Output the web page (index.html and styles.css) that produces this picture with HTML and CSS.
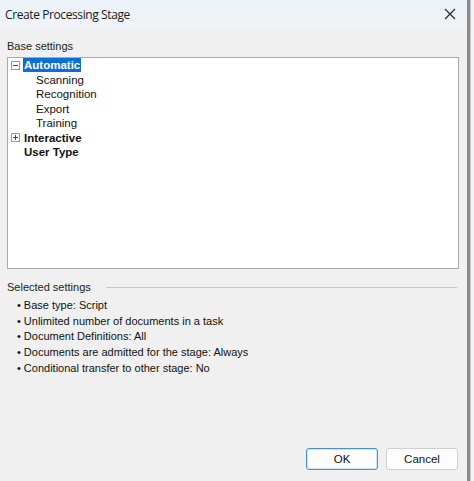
FILE: index.html
```html
<!DOCTYPE html>
<html>
<head>
<meta charset="utf-8">
<link rel="stylesheet" href="styles.css">
</head>
<body>
<div class="screen">
  <div class="dialog">
    <div class="titlebar">
      <span class="title">Create Processing Stage</span>
      <svg class="close" width="12" height="12" viewBox="0 0 12 12"><path d="M1 1L11 11M11 1L1 11" stroke="#222" stroke-width="1.1" fill="none"/></svg>
    </div>
    <div class="content">
      <div class="label">Base settings</div>
      <div class="tree">
        <div class="node top">
          <span class="toggle"><svg width="9" height="9" viewBox="0 0 9 9"><rect x="0.5" y="0.5" width="8" height="8" fill="#fff" stroke="#999"/><path d="M2 4.5H7" stroke="#444"/></svg></span>
          <span class="name sel">Automatic</span>
        </div>
        <div class="node child"><span class="name">Scanning</span></div>
        <div class="node child"><span class="name">Recognition</span></div>
        <div class="node child"><span class="name">Export</span></div>
        <div class="node child"><span class="name">Training</span></div>
        <div class="node top">
          <span class="toggle"><svg width="9" height="9" viewBox="0 0 9 9"><rect x="0.5" y="0.5" width="8" height="8" fill="#fff" stroke="#999"/><path d="M2 4.5H7M4.5 2V7" stroke="#444"/></svg></span>
          <span class="name">Interactive</span>
        </div>
        <div class="node top"><span class="toggle"></span><span class="name">User Type</span></div>
      </div>
      <div class="group">
        <span class="label">Selected settings</span>
        <span class="rule"></span>
      </div>
      <ul class="settings">
        <li>Base type: Script</li>
        <li>Unlimited number of documents in a task</li>
        <li>Document Definitions: All</li>
        <li>Documents are admitted for the stage: Always</li>
        <li>Conditional transfer to other stage: No</li>
      </ul>
      <div class="buttons">
        <button class="btn default">OK</button>
        <button class="btn">Cancel</button>
      </div>
    </div>
  </div>
  <div class="edge"></div>
</div>
</body>
</html>
```
FILE: styles.css
```css
html, body {
  margin: 0;
  padding: 0;
  width: 474px;
  height: 481px;
  overflow: hidden;
  background: #f4f4f4;
}
.screen {
  display: flex;
  height: 481px;
}
.dialog {
  width: 467px;
  height: 481px;
  display: flex;
  flex-direction: column;
  background: #f0f0f0;
  font-family: "Liberation Sans", sans-serif;
  color: #111;
}
.edge {
  width: 3px;
  background: #8a8a8a;
  border-right: 1px solid #c8c8c8;
}
.titlebar {
  height: 29px;
  flex: none;
  display: flex;
  align-items: center;
  justify-content: space-between;
  padding: 0 11px 0 5px;
  background: linear-gradient(#eaf2f9, #f1f4f7);
}
.title {
  font-family: "Open Sans", "Liberation Sans", sans-serif;
  font-size: 12px;
  letter-spacing: -0.4px;
  color: #1a1a1a;
  margin-top: -1px;
}
.close { margin-top: -2px; }
.content {
  flex: 1;
  display: flex;
  flex-direction: column;
  padding: 9px 8px 0 7px;
}
.label {
  font-size: 11px;
  line-height: 16px;
  color: #222;
}
.tree {
  margin-top: 3px;
  height: 210px;
  background: #fff;
  border: 1px solid #a9a9a9;
  padding: 0 0 0 3px;
  font-size: 11.5px;
}
.node {
  display: flex;
  align-items: center;
  height: 14.5px;
}
.toggle {
  width: 12px;
  display: flex;
  align-items: center;
}
.toggle svg { display: block; }
.top .name { font-weight: bold; }
.name { padding: 0 1px; line-height: 14px; }
.name.sel { background: #0a6fd6; color: #fff; }
.child { padding-left: 24px; }
.group {
  display: flex;
  align-items: center;
  margin-top: 10px;
  gap: 15px;
}
.rule {
  flex: 1;
  height: 0;
  border-top: 1px solid #c8c8c8;
  margin-right: 2px;
}
.settings {
  list-style: none;
  margin: 3px 0 0 0;
  padding: 0 0 0 10px;
  font-size: 11px;
  color: #111;
}
.settings li {
  line-height: 15.7px;
}
.settings li::before {
  content: "\2022";
  margin-right: 3px;
}
.buttons {
  margin-top: auto;
  margin-bottom: 11px;
  display: flex;
  justify-content: flex-end;
  gap: 8px;
  padding-right: 1px;
}
.btn {
  width: 72px;
  height: 22px;
  background: #fdfdfd;
  border: 1px solid #d0d0d0;
  border-radius: 3px;
  font-family: "Liberation Sans", sans-serif;
  font-size: 11.5px;
  color: #111;
  padding: 0;
}
.btn.default {
  border: 1px solid #4a8ed4;
  box-shadow: inset 0 0 0 1px #cfe3f7;
}
```
